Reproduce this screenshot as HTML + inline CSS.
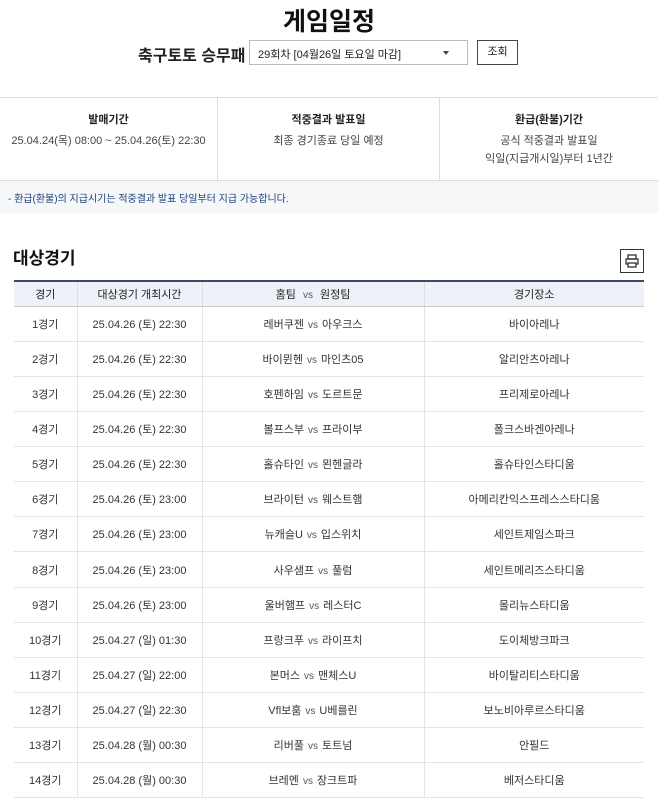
<!DOCTYPE html>
<html><head><meta charset="utf-8"><style>
*{margin:0;padding:0;box-sizing:border-box}
body{width:658px;height:803px;overflow:hidden;background:#fff;font-family:"Liberation Sans","Noto Sans CJK KR",sans-serif;color:#333;position:relative}
.abs{position:absolute}
h1{position:absolute;top:2px;left:0;width:658px;text-align:center;font-size:25px;font-weight:bold;color:#111}
.lbl{left:138px;top:42px;font-size:16px;font-weight:bold;color:#222}
.sel{left:249px;top:40px;width:219px;height:25px;border:1px solid #bbb;font-size:11px;padding:5px 0 0 8px;color:#222}
.sel:after{content:"";position:absolute;right:18px;top:10px;border:3px solid transparent;border-top:4px solid #444}
.btn{left:477px;top:40px;width:41px;height:25px;border:1px solid #444;font-size:11px;text-align:center;line-height:23px;color:#222}
.info{left:0;top:97px;width:658px;height:84px;border-top:1px solid #ddd;border-bottom:1px solid #ddd;display:flex}
.info div{text-align:center;font-size:11px;line-height:18px;padding-top:13px;color:#444}
.info b{display:block;color:#222;margin-bottom:3px}
.note{left:0;top:181px;width:658px;height:32px;background:#f6f7f9;font-size:10px;color:#1c3f7a;padding:9px 0 0 8px}
.h2{left:13px;top:244px;font-size:17px;font-weight:bold;color:#111}
.pr{left:620px;top:249px;width:24px;height:24px;border:1px solid #333}
table{position:absolute;left:14px;top:280px;width:630px;border-collapse:collapse;border-top:2px solid #3c4a66;font-size:11px;color:#333}
th{background:#eef2f8;font-weight:normal;height:25px;border-bottom:1px solid #ccc;border-left:1px solid #ddd;color:#222}
td{height:35.15px;text-align:center;border-bottom:1px solid #e4e4e4;border-left:1px solid #e4e4e4}
th:first-child,td:first-child{border-left:none}
.vs{font-size:10px;color:#555;margin:0 4px}
</style></head><body>
<h1>게임일정</h1>
<div class="abs lbl">축구토토 승무패</div>
<div class="abs sel">29회차 [04월26일 토요일 마감]</div>
<div class="abs btn">조회</div>
<div class="abs info">
<div style="width:218px;border-right:1px solid #ddd"><b>발매기간</b>25.04.24(목) 08:00 ~ 25.04.26(토) 22:30</div>
<div style="width:222px;border-right:1px solid #ddd"><b>적중결과 발표일</b>최종 경기종료 당일 예정</div>
<div style="width:218px"><b>환급(환불)기간</b>공식 적중결과 발표일<br>익일(지급개시일)부터 1년간</div>
</div>
<div class="abs note">- 환급(환불)의 지급시기는 적중결과 발표 당일부터 지급 가능합니다.</div>
<div class="abs h2">대상경기</div>
<div class="abs pr"><svg width="22" height="22" viewBox="0 0 22 22"><rect x="7" y="5" width="8" height="4" fill="none" stroke="#333" stroke-width="1.3"/><rect x="5" y="9" width="12" height="5" fill="none" stroke="#333" stroke-width="1.3"/><rect x="7" y="13" width="8" height="4" fill="#fff" stroke="#333" stroke-width="1.3"/></svg></div>
<table>
<tr><th style="width:63px">경기</th><th style="width:125px">대상경기 개최시간</th><th style="width:222px">홈팀 <span class="vs">vs</span> 원정팀</th><th>경기장소</th></tr>
<tr><td>1경기</td><td>25.04.26 (토) 22:30</td><td>레버쿠젠<span class="vs">vs</span>아우크스</td><td>바이아레나</td></tr>
<tr><td>2경기</td><td>25.04.26 (토) 22:30</td><td>바이뮌헨<span class="vs">vs</span>마인츠05</td><td>알리안츠아레나</td></tr>
<tr><td>3경기</td><td>25.04.26 (토) 22:30</td><td>호펜하임<span class="vs">vs</span>도르트문</td><td>프리제로아레나</td></tr>
<tr><td>4경기</td><td>25.04.26 (토) 22:30</td><td>볼프스부<span class="vs">vs</span>프라이부</td><td>폴크스바겐아레나</td></tr>
<tr><td>5경기</td><td>25.04.26 (토) 22:30</td><td>홀슈타인<span class="vs">vs</span>묀헨글라</td><td>홀슈타인스타디움</td></tr>
<tr><td>6경기</td><td>25.04.26 (토) 23:00</td><td>브라이턴<span class="vs">vs</span>웨스트햄</td><td>아메리칸익스프레스스타디움</td></tr>
<tr><td>7경기</td><td>25.04.26 (토) 23:00</td><td>뉴캐슬U<span class="vs">vs</span>입스위치</td><td>세인트제임스파크</td></tr>
<tr><td>8경기</td><td>25.04.26 (토) 23:00</td><td>사우샘프<span class="vs">vs</span>풀럼</td><td>세인트메리즈스타디움</td></tr>
<tr><td>9경기</td><td>25.04.26 (토) 23:00</td><td>울버햄프<span class="vs">vs</span>레스터C</td><td>몰리뉴스타디움</td></tr>
<tr><td>10경기</td><td>25.04.27 (일) 01:30</td><td>프랑크푸<span class="vs">vs</span>라이프치</td><td>도이체방크파크</td></tr>
<tr><td>11경기</td><td>25.04.27 (일) 22:00</td><td>본머스<span class="vs">vs</span>맨체스U</td><td>바이탈리티스타디움</td></tr>
<tr><td>12경기</td><td>25.04.27 (일) 22:30</td><td>Vfl보훔<span class="vs">vs</span>U베를린</td><td>보노비아루르스타디움</td></tr>
<tr><td>13경기</td><td>25.04.28 (월) 00:30</td><td>리버풀<span class="vs">vs</span>토트넘</td><td>안필드</td></tr>
<tr><td>14경기</td><td>25.04.28 (월) 00:30</td><td>브레멘<span class="vs">vs</span>장크트파</td><td>베저스타디움</td></tr>
</table>
</body></html>
